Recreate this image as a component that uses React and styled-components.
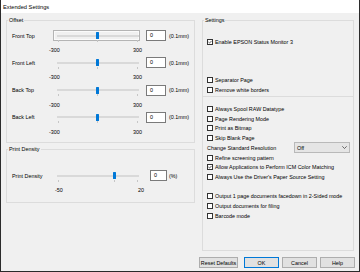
import React from 'react';
import styled, { createGlobalStyle } from 'styled-components';

const GlobalStyle = createGlobalStyle`
  html, body { margin: 0; padding: 0; background: #f0f0f0; }
  body { font-family: "Liberation Sans", Arial, sans-serif; }
  * { box-sizing: border-box; }
`;

const Window = styled.div`
  width: 360px;
  height: 272px;
  background: #f0f0f0;
  border: 1px solid #2b2b2b;
  border-top: none;
  display: flex;
  flex-direction: column;
  font-family: "Liberation Sans", Arial, sans-serif;
  font-size: 5.4px;
  color: #000;
  overflow: hidden;
`;

const TitleBar = styled.div`
  height: 13px;
  flex: none;
  background: #fff;
  display: flex;
  align-items: center;
  padding-left: 2px;
  font-size: 5.7px;
`;

const Body = styled.div`
  height: 238px;
  flex: none;
  display: grid;
  grid-template-columns: 189px 152px;
  column-gap: 7px;
  padding: 3px 0 0 5px;
`;

const Column = styled.div`
  display: flex;
  flex-direction: column;
  gap: 2px;
`;

const Group = styled.fieldset`
  margin: 0;
  padding: 0;
  min-width: 0;
  border: 1px solid #dcdcdc;
  height: ${(p) => (p.$fill ? '100%' : 'auto')};
`;

const Legend = styled.legend`
  margin-left: 1px;
  padding: 0 1px;
  line-height: 8px;
  font-size: 5.4px;
`;

const GroupInner = styled.div`
  padding: ${(p) => p.$pad};
  display: flex;
  flex-direction: column;
`;

const SliderBlock = styled.div`
  height: ${(p) => p.$h};
  display: flex;
  flex-direction: column;
`;

const SliderRow = styled.div`
  height: 11px;
  display: flex;
  align-items: center;
`;

const RowLabel = styled.div`
  width: 41px;
  flex: none;
  white-space: nowrap;
`;

const SliderBox = styled.div`
  width: 87px;
  height: 11px;
  flex: none;
  display: flex;
  align-items: center;
  padding: 0 0 0 3px;
  border: 1px solid ${(p) => (p.$focused ? '#b4b4b4' : 'transparent')};
  box-shadow: ${(p) => (p.$focused ? 'inset 0 0 0 1px #fafafa' : 'none')};
`;

const Track = styled.div`
  flex: 1;
  height: 2px;
  background: #d9d9d9;
  position: relative;
`;

const Thumb = styled.div`
  position: absolute;
  top: -2.5px;
  width: 3px;
  height: 7px;
  background: #0078d7;
  border-radius: 0.5px;
`;

const Tick = styled.div`
  position: absolute;
  top: 5px;
  width: 1px;
  height: 2px;
  background: #c6c6c6;
`;

const NumberBox = styled.div`
  width: ${(p) => p.$w}px;
  height: 11px;
  margin-left: ${(p) => p.$gap}px;
  flex: none;
  background: #fff;
  border: 1px solid #7a7a7a;
  padding-left: 3px;
  line-height: 9px;
`;

const Unit = styled.div`
  margin-left: ${(p) => p.$gap}px;
  white-space: nowrap;
`;

const ScaleRow = styled.div`
  padding-top: 5px;
  padding-left: ${(p) => p.$left}px;
  width: ${(p) => p.$left + p.$w}px;
  line-height: 8px;
  display: flex;
  justify-content: space-between;
`;

const CheckRow = styled.div`
  height: ${(p) => p.$h}px;
  margin-top: ${(p) => p.$mt || 0}px;
  display: flex;
  align-items: center;
  gap: 2px;
  white-space: nowrap;
`;

const Box = styled.div`
  width: 6px;
  height: 6px;
  flex: none;
  background: #fff;
  border: 1px solid #333;
  display: flex;
  align-items: center;
  justify-content: center;
`;

const Divider = styled.div`
  height: 1px;
  background: #dcdcdc;
  margin: 1px -3px 0 -4px;
`;

const SelectRow = styled.div`
  height: 9.75px;
  display: flex;
  align-items: center;
  justify-content: space-between;
  white-space: nowrap;
`;

const Select = styled.div`
  width: 56px;
  height: 11px;
  background: #e5e5e5;
  border: 1px solid #b9b9b9;
  display: flex;
  align-items: center;
  justify-content: space-between;
  padding: 0 2px 0 2px;
`;

const Footer = styled.div`
  display: flex;
  justify-content: flex-end;
  padding: 6px 4px 0 0;
  gap: 3px;
`;

const Button = styled.div`
  width: ${(p) => p.$w}px;
  height: 11px;
  margin-right: ${(p) => p.$mr || 0}px;
  background: #e1e1e1;
  border: 1px solid ${(p) => (p.$primary ? '#0078d7' : '#adadad')};
  display: flex;
  align-items: center;
  justify-content: center;
  white-space: nowrap;
`;

function Slider({ min, max, value, ticks, focused }) {
  const f = (v) => (v - min) / (max - min);
  return (
    <SliderBox $focused={focused}>
      <Track>
        {ticks.map((t) => (
          <Tick key={t} style={{ left: `calc(${f(t)} * 79px + 0.5px)` }} />
        ))}
        <Thumb style={{ left: `calc(${f(value)} * 79px - 0.5px)` }} />
      </Track>
    </SliderBox>
  );
}

function Check({ label, checked, h = 9.75, mt }) {
  return (
    <CheckRow $h={h} $mt={mt}>
      <Box>
        {checked && (
          <svg width="5" height="4" viewBox="0 0 5 4">
            <polyline points="0.5,2 1.9,3.3 4.5,0.6" fill="none" stroke="#222" strokeWidth="0.9" />
          </svg>
        )}
      </Box>
      <span>{label}</span>
    </CheckRow>
  );
}

const offsetRows = ['Front Top', 'Front Left', 'Back Top', 'Back Left'];

export default function App() {
  return (
    <>
      <GlobalStyle />
      <Window>
        <TitleBar>Extended Settings</TitleBar>
        <Body>
          <Column>
            <Group>
              <Legend>Offset</Legend>
              <GroupInner $pad="6px 0 3px 5px">
                {offsetRows.map((label, i) => (
                  <SliderBlock key={label} $h="27.3px">
                    <SliderRow>
                      <RowLabel>{label}</RowLabel>
                      <Slider min={-300} max={300} value={0} ticks={[-300, 0, 300]} focused={i === 0} />
                      <NumberBox $w={20} $gap={6}>0</NumberBox>
                      <Unit $gap={3}>(0.1mm)</Unit>
                    </SliderRow>
                    <ScaleRow $left={37} $w={93}>
                      <span>-300</span>
                      <span>300</span>
                    </ScaleRow>
                  </SliderBlock>
                ))}
              </GroupInner>
            </Group>
            <Group>
              <Legend>Print Density</Legend>
              <GroupInner $pad="17px 0 8px 5px">
                <SliderBlock $h="24px">
                  <SliderRow>
                    <RowLabel>Print Density</RowLabel>
                    <Slider min={-50} max={20} value={0} ticks={[-50, 0, 20]} />
                    <NumberBox $w={17} $gap={10}>0</NumberBox>
                    <Unit $gap={2}>(%)</Unit>
                  </SliderRow>
                  <ScaleRow $left={43} $w={89}>
                    <span>-50</span>
                    <span>20</span>
                  </ScaleRow>
                </SliderBlock>
              </GroupInner>
            </Group>
          </Column>
          <Group $fill>
            <Legend>Settings</Legend>
            <GroupInner $pad="12.7px 3px 0 4px">
              <Check label="Enable EPSON Status Monitor 3" checked h={10} />
              <Check label="Separator Page" h={10} mt={28.3} />
              <Check label="Remove white borders" h={10} />
              <Divider />
              <Check label="Always Spool RAW Datatype" mt={7.1} />
              <Check label="Page Rendering Mode" />
              <Check label="Print as Bitmap" />
              <Check label="Skip Blank Page" />
              <SelectRow>
                <span>Change Standard Resolution</span>
                <Select>
                  <span>Off</span>
                  <svg width="5" height="3" viewBox="0 0 5 3">
                    <polyline points="0.3,0.3 2.5,2.5 4.7,0.3" fill="none" stroke="#333" strokeWidth="0.7" />
                  </svg>
                </Select>
              </SelectRow>
              <Check label="Refine screening pattern" />
              <Check label="Allow Applications to Perform ICM Color Matching" checked />
              <Check label="Always Use the Driver's Paper Source Setting" />
              <Check label="Output 1 page documents facedown in 2-Sided mode" h={10} mt={8.6} />
              <Check label="Output documents for filing" h={10} />
              <Check label="Barcode mode" h={10} />
            </GroupInner>
          </Group>
        </Body>
        <Footer>
          <Button $w={39} $mr={3}>Reset Defaults</Button>
          <Button $w={35} $primary>OK</Button>
          <Button $w={35}>Cancel</Button>
          <Button $w={35}>Help</Button>
        </Footer>
      </Window>
    </>
  );
}
